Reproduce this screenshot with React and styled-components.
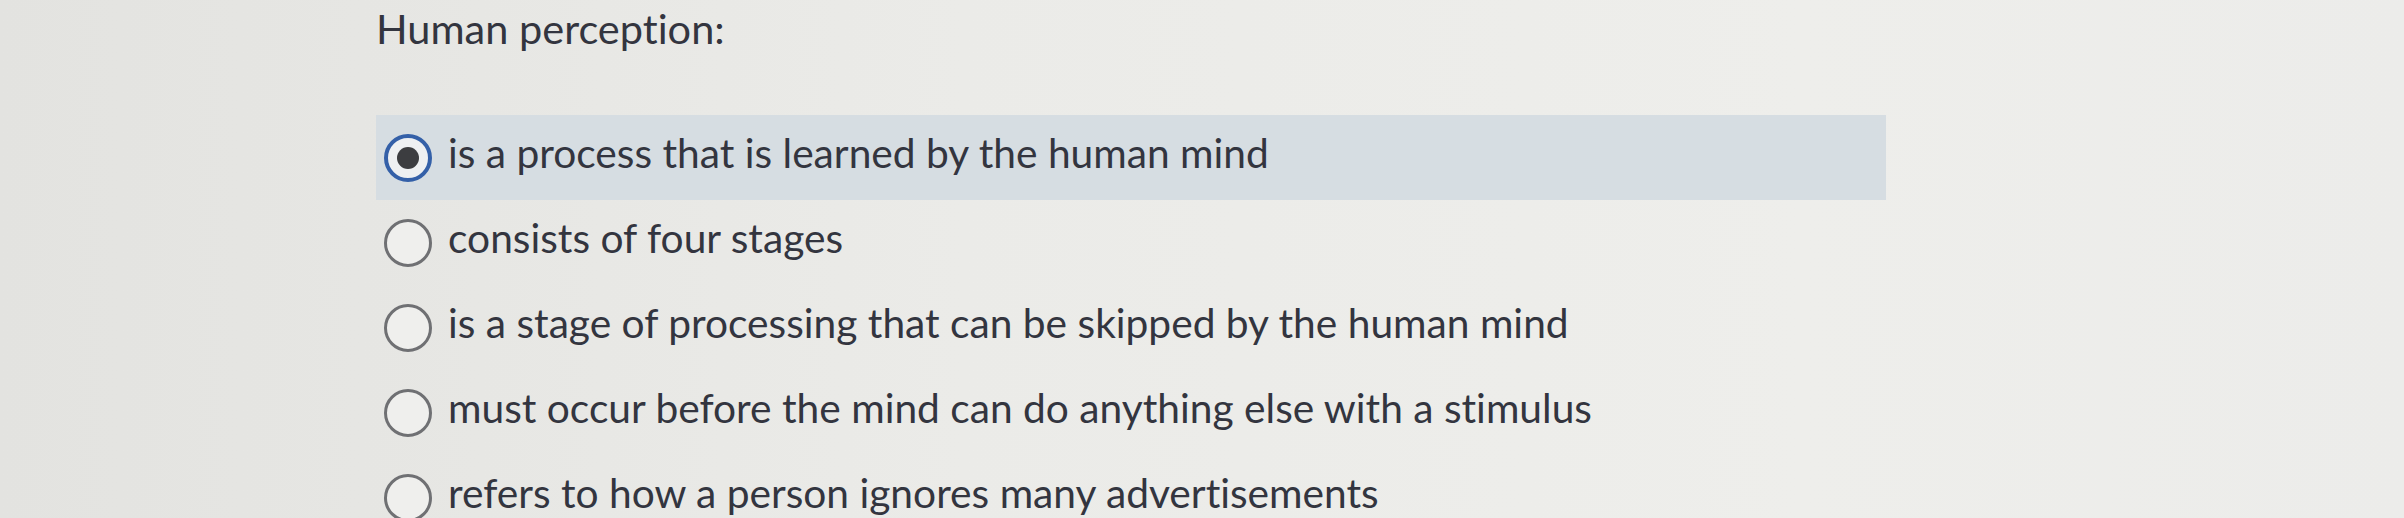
import React from "react";
import styled, { createGlobalStyle } from "styled-components";

const Global = createGlobalStyle`
  html, body {
    margin: 0;
    padding: 0;
  }
  body {
    width: 2404px;
    height: 518px;
    overflow: hidden;
    background: linear-gradient(90deg, #e3e3e0 0%, #ebebe8 40%, #eeeeeb 75%, #ececea 100%);
    font-family: Lato, "Noto Sans", sans-serif;
    font-variant-ligatures: none;
    color: #353743;
  }
`;

const Page = styled.div`
  padding-left: 376px;
  display: flex;
  flex-direction: column;
`;

const Question = styled.h1`
  margin: 0;
  height: 115px;
  font-size: 41.5px;
  line-height: 56px;
  font-weight: 400;
  color: #33353f;
`;

const Options = styled.div`
  display: flex;
  flex-direction: column;
  width: 1510px;
`;

const Row = styled.label`
  display: flex;
  align-items: center;
  height: 85px;
  padding-left: 8px;
  gap: 16px;
  background: ${(p) => (p.selected ? "#d6dde2" : "transparent")};
`;

const Radio = styled.span`
  box-sizing: border-box;
  flex: none;
  width: 48px;
  height: 48px;
  border-radius: 50%;
  border: ${(p) => (p.selected ? "4px solid #3460a8" : "3px solid #6f7073")};
  background: ${(p) => (p.selected ? "#eef0f2" : "#efefed")};
  display: flex;
  align-items: center;
  justify-content: center;

  &::after {
    content: "";
    display: ${(p) => (p.selected ? "block" : "none")};
    width: 22px;
    height: 22px;
    border-radius: 50%;
    background: #3c3d40;
  }
`;

const Text = styled.span`
  font-size: 40.7px;
  margin-bottom: 10px;
  color: #33353f;
`;

const answers = [
  "is a process that is learned by the human mind",
  "consists of four stages",
  "is a stage of processing that can be skipped by the human mind",
  "must occur before the mind can do anything else with a stimulus",
  "refers to how a person ignores many advertisements",
];

export default function App() {
  return (
    <>
      <Global />
      <Page>
        <Question>Human perception:</Question>
        <Options>
          {answers.map((a, i) => (
            <Row key={a} selected={i === 0}>
              <Radio selected={i === 0} />
              <Text>{a}</Text>
            </Row>
          ))}
        </Options>
      </Page>
    </>
  );
}
